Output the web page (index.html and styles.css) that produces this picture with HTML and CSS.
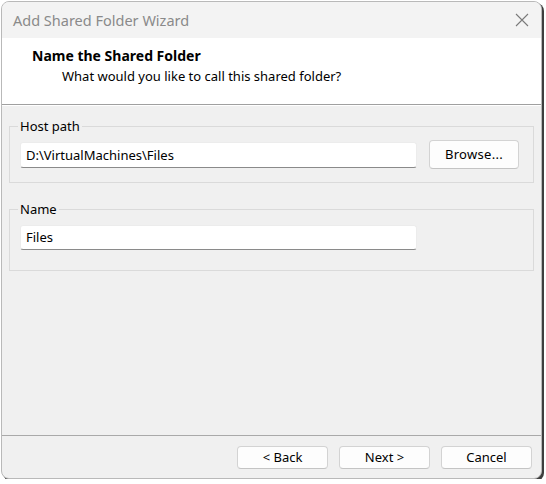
FILE: index.html
```html
<!DOCTYPE html>
<html>
<head>
<meta charset="utf-8">
<link rel="stylesheet" href="styles.css">
</head>
<body>
<div class="window">
  <div class="titlebar">
    <span class="title">Add Shared Folder Wizard</span>
    <svg class="close" width="14" height="14" viewBox="0 0 14 14"><path d="M1 1L13 13M13 1L1 13" stroke="#7a7a7a" stroke-width="1.1" fill="none"/></svg>
  </div>
  <div class="header">
    <div class="h-title">Name the Shared Folder</div>
    <div class="h-sub">What would you like to call this shared folder?</div>
  </div>
  <div class="content">
    <fieldset class="group g1">
      <legend>Host path</legend>
      <div class="row">
        <div class="input">D:\VirtualMachines\Files</div>
        <div class="btn browse">Browse...</div>
      </div>
    </fieldset>
    <fieldset class="group g2">
      <legend>Name</legend>
      <div class="row">
        <div class="input">Files</div>
      </div>
    </fieldset>
  </div>
  <div class="footer">
    <div class="btn">&lt; Back</div>
    <div class="btn">Next &gt;</div>
    <div class="btn">Cancel</div>
  </div>
</div>
</body>
</html>
```
FILE: styles.css
```css
html, body { margin: 0; padding: 0; background: #ffffff; }
body { font-family: "Noto Sans", sans-serif; font-size: 13px; color: #000; }
.window {
  margin: 1px 0 0 1px;
  width: 539px;
  height: 476px;
  border: 1px solid #b9b9b9;
  border-radius: 8px;
  box-shadow: 2px 2px 0 #3e3e3e;
  background: #f0f0f0;
  overflow: hidden;
  display: flex;
  flex-direction: column;
}
.titlebar {
  height: 36px;
  background: #f3f3f3;
  display: flex;
  align-items: center;
  justify-content: space-between;
  padding: 0 12px 0 11px;
  flex: none;
}
.title { font-size: 14.5px; color: #8a8a8a; }
.close { display: block; }
.header {
  background: #fff;
  height: 56px;
  padding: 10px 0 0 30px;
  border-bottom: 1px solid #a0a0a0;
  box-shadow: 0 1px 0 #ffffff;
  flex: none;
}
.h-title { font-weight: bold; font-size: 14px; line-height: 16px; }
.h-sub { font-size: 13px; line-height: 16px; margin: 4px 0 0 30px; }
.content { flex: 1; padding: 13px 7px 0 7px; }
.group {
  margin: 0;
  border: 1px solid #dadada;
  padding: 6px 12px 13px 10px;
}
.g2 { margin-top: 18px; padding-top: 8px; padding-bottom: 20px; }
legend { font-size: 13px; line-height: 16px; padding: 0 2px; margin-left: -2px; }
.row { display: flex; align-items: center; gap: 12px; }
.input {
  width: 397px;
  height: 25px;
  box-sizing: border-box;
  background: #fff;
  border: 1px solid #ececec;
  border-bottom: 1px solid #8a8a8a;
  border-radius: 3px;
  padding: 0 5px;
  font-size: 13px;
  line-height: 23px;
}
.g1 .input { height: 26px; line-height: 24px; }
.btn {
  box-sizing: border-box;
  width: 91px;
  height: 23px;
  background: #fdfdfd;
  border: 1px solid #d3d3d3;
  border-bottom-color: #c4c4c4;
  border-radius: 4px;
  text-align: center;
  font-size: 13px;
  line-height: 21px;
}
.browse { width: 90px; height: 29px; line-height: 27px; letter-spacing: 0.3px; }
.footer {
  height: 43px;
  flex: none;
  border-top: 1px solid #a9a9a9;
  display: flex;
  justify-content: flex-end;
  align-items: flex-start;
  gap: 11px;
  padding: 10px 9px 0 0;
  box-sizing: border-box;
}
```
